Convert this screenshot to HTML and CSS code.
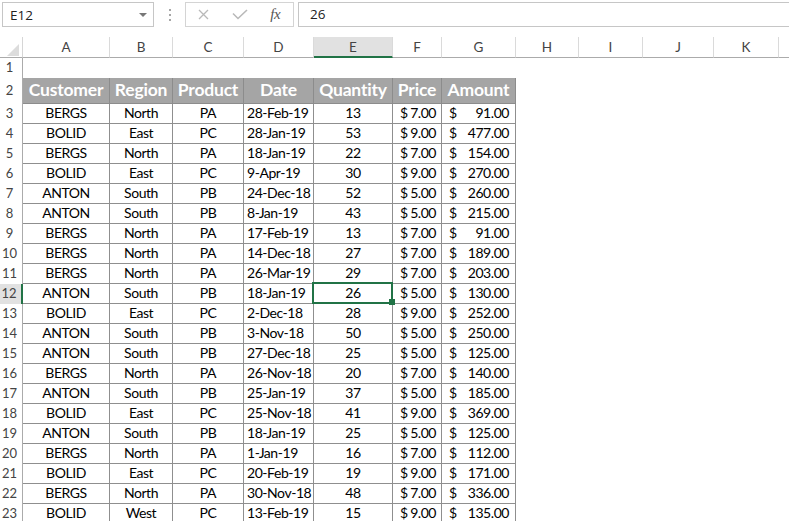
FILE: index.html
```html
<!DOCTYPE html>
<html>
<head>
<meta charset="utf-8">
<link rel="stylesheet" href="styles.css">
</head>
<body>
<div class="toolbar">
  <div class="namebox"><span>E12</span><span class="arrow"></span></div>
  <div class="grip"><i></i><i></i><i></i></div>
  <div class="fbtns">
    <div class="fbtn"><svg width="11" height="11" viewBox="0 0 11 11"><path d="M1 1L10 10M10 1L1 10" stroke="#b9b9b9" stroke-width="1.3" fill="none"/></svg></div>
    <div class="fbtn"><svg width="16" height="11" viewBox="0 0 16 11"><path d="M1 4.5L6 9.5L15 1" stroke="#b9b9b9" stroke-width="1.6" fill="none"/></svg></div>
    <div class="fbtn fx">fx</div>
  </div>
  <div class="finput">26</div>
</div>
<div class="sheet">
  <div class="row colhdr">
    <div class="corner"><span class="tri"></span></div>
    <div class="ch a">A</div><div class="ch b">B</div><div class="ch c">C</div><div class="ch d">D</div><div class="ch e active">E</div><div class="ch f">F</div><div class="ch g">G</div><div class="ch h">H</div><div class="ch i">I</div><div class="ch j">J</div><div class="ch k">K</div><div class="ch l"></div>
  </div>
  <div class="row"><div class="rh">1</div></div>
  <div class="row head"><div class="rh">2</div><div class="cell a">Customer</div><div class="cell b">Region</div><div class="cell c">Product</div><div class="cell d">Date</div><div class="cell e">Quantity</div><div class="cell f">Price</div><div class="cell g">Amount</div></div>
  <div class="row"><div class="rh">3</div><div class="cell a">BERGS</div><div class="cell b">North</div><div class="cell c">PA</div><div class="cell d">28-Feb-19</div><div class="cell e">13</div><div class="cell f acc"><span>$</span><span>7.00</span></div><div class="cell g acc"><span>$</span><span>91.00</span></div></div>
  <div class="row"><div class="rh">4</div><div class="cell a">BOLID</div><div class="cell b">East</div><div class="cell c">PC</div><div class="cell d">28-Jan-19</div><div class="cell e">53</div><div class="cell f acc"><span>$</span><span>9.00</span></div><div class="cell g acc"><span>$</span><span>477.00</span></div></div>
  <div class="row"><div class="rh">5</div><div class="cell a">BERGS</div><div class="cell b">North</div><div class="cell c">PA</div><div class="cell d">18-Jan-19</div><div class="cell e">22</div><div class="cell f acc"><span>$</span><span>7.00</span></div><div class="cell g acc"><span>$</span><span>154.00</span></div></div>
  <div class="row"><div class="rh">6</div><div class="cell a">BOLID</div><div class="cell b">East</div><div class="cell c">PC</div><div class="cell d">9-Apr-19</div><div class="cell e">30</div><div class="cell f acc"><span>$</span><span>9.00</span></div><div class="cell g acc"><span>$</span><span>270.00</span></div></div>
  <div class="row"><div class="rh">7</div><div class="cell a">ANTON</div><div class="cell b">South</div><div class="cell c">PB</div><div class="cell d">24-Dec-18</div><div class="cell e">52</div><div class="cell f acc"><span>$</span><span>5.00</span></div><div class="cell g acc"><span>$</span><span>260.00</span></div></div>
  <div class="row"><div class="rh">8</div><div class="cell a">ANTON</div><div class="cell b">South</div><div class="cell c">PB</div><div class="cell d">8-Jan-19</div><div class="cell e">43</div><div class="cell f acc"><span>$</span><span>5.00</span></div><div class="cell g acc"><span>$</span><span>215.00</span></div></div>
  <div class="row"><div class="rh">9</div><div class="cell a">BERGS</div><div class="cell b">North</div><div class="cell c">PA</div><div class="cell d">17-Feb-19</div><div class="cell e">13</div><div class="cell f acc"><span>$</span><span>7.00</span></div><div class="cell g acc"><span>$</span><span>91.00</span></div></div>
  <div class="row"><div class="rh">10</div><div class="cell a">BERGS</div><div class="cell b">North</div><div class="cell c">PA</div><div class="cell d">14-Dec-18</div><div class="cell e">27</div><div class="cell f acc"><span>$</span><span>7.00</span></div><div class="cell g acc"><span>$</span><span>189.00</span></div></div>
  <div class="row"><div class="rh">11</div><div class="cell a">BERGS</div><div class="cell b">North</div><div class="cell c">PA</div><div class="cell d">26-Mar-19</div><div class="cell e">29</div><div class="cell f acc"><span>$</span><span>7.00</span></div><div class="cell g acc"><span>$</span><span>203.00</span></div></div>
  <div class="row"><div class="rh active">12</div><div class="cell a">ANTON</div><div class="cell b">South</div><div class="cell c">PB</div><div class="cell d">18-Jan-19</div><div class="cell e selected">26</div><div class="cell f acc"><span>$</span><span>5.00</span></div><div class="cell g acc"><span>$</span><span>130.00</span></div></div>
  <div class="row"><div class="rh">13</div><div class="cell a">BOLID</div><div class="cell b">East</div><div class="cell c">PC</div><div class="cell d">2-Dec-18</div><div class="cell e">28</div><div class="cell f acc"><span>$</span><span>9.00</span></div><div class="cell g acc"><span>$</span><span>252.00</span></div></div>
  <div class="row"><div class="rh">14</div><div class="cell a">ANTON</div><div class="cell b">South</div><div class="cell c">PB</div><div class="cell d">3-Nov-18</div><div class="cell e">50</div><div class="cell f acc"><span>$</span><span>5.00</span></div><div class="cell g acc"><span>$</span><span>250.00</span></div></div>
  <div class="row"><div class="rh">15</div><div class="cell a">ANTON</div><div class="cell b">South</div><div class="cell c">PB</div><div class="cell d">27-Dec-18</div><div class="cell e">25</div><div class="cell f acc"><span>$</span><span>5.00</span></div><div class="cell g acc"><span>$</span><span>125.00</span></div></div>
  <div class="row"><div class="rh">16</div><div class="cell a">BERGS</div><div class="cell b">North</div><div class="cell c">PA</div><div class="cell d">26-Nov-18</div><div class="cell e">20</div><div class="cell f acc"><span>$</span><span>7.00</span></div><div class="cell g acc"><span>$</span><span>140.00</span></div></div>
  <div class="row"><div class="rh">17</div><div class="cell a">ANTON</div><div class="cell b">South</div><div class="cell c">PB</div><div class="cell d">25-Jan-19</div><div class="cell e">37</div><div class="cell f acc"><span>$</span><span>5.00</span></div><div class="cell g acc"><span>$</span><span>185.00</span></div></div>
  <div class="row"><div class="rh">18</div><div class="cell a">BOLID</div><div class="cell b">East</div><div class="cell c">PC</div><div class="cell d">25-Nov-18</div><div class="cell e">41</div><div class="cell f acc"><span>$</span><span>9.00</span></div><div class="cell g acc"><span>$</span><span>369.00</span></div></div>
  <div class="row"><div class="rh">19</div><div class="cell a">ANTON</div><div class="cell b">South</div><div class="cell c">PB</div><div class="cell d">18-Jan-19</div><div class="cell e">25</div><div class="cell f acc"><span>$</span><span>5.00</span></div><div class="cell g acc"><span>$</span><span>125.00</span></div></div>
  <div class="row"><div class="rh">20</div><div class="cell a">BERGS</div><div class="cell b">North</div><div class="cell c">PA</div><div class="cell d">1-Jan-19</div><div class="cell e">16</div><div class="cell f acc"><span>$</span><span>7.00</span></div><div class="cell g acc"><span>$</span><span>112.00</span></div></div>
  <div class="row"><div class="rh">21</div><div class="cell a">BOLID</div><div class="cell b">East</div><div class="cell c">PC</div><div class="cell d">20-Feb-19</div><div class="cell e">19</div><div class="cell f acc"><span>$</span><span>9.00</span></div><div class="cell g acc"><span>$</span><span>171.00</span></div></div>
  <div class="row"><div class="rh">22</div><div class="cell a">BERGS</div><div class="cell b">North</div><div class="cell c">PA</div><div class="cell d">30-Nov-18</div><div class="cell e">48</div><div class="cell f acc"><span>$</span><span>7.00</span></div><div class="cell g acc"><span>$</span><span>336.00</span></div></div>
  <div class="row"><div class="rh">23</div><div class="cell a">BOLID</div><div class="cell b">West</div><div class="cell c">PC</div><div class="cell d">13-Feb-19</div><div class="cell e">15</div><div class="cell f acc"><span>$</span><span>9.00</span></div><div class="cell g acc"><span>$</span><span>135.00</span></div></div>
</div>
</body>
</html>
```
FILE: styles.css
```css
* { box-sizing: border-box; }
html, body { margin: 0; padding: 0; background: #fff; }
body {
  width: 789px;
  height: 521px;
  overflow: hidden;
  font-family: Lato, "Liberation Sans", sans-serif;
  color: #000;
}

/* formula bar */
.toolbar {
  display: flex;
  align-items: flex-start;
  height: 37px;
  padding-top: 2px;
}
.namebox {
  margin-left: 2px;
  width: 152px;
  height: 25px;
  border: 1px solid #c6c6c6;
  display: flex;
  align-items: center;
  justify-content: space-between;
  padding: 0 6px 0 7px;
  font-family: "Open Sans", "Liberation Sans", sans-serif;
  font-size: 13.5px;
  color: #222;
}
.arrow {
  width: 0;
  height: 0;
  border-left: 4px solid transparent;
  border-right: 4px solid transparent;
  border-top: 4px solid #777;
}
.grip {
  width: 31px;
  height: 25px;
  display: flex;
  flex-direction: column;
  align-items: center;
  justify-content: center;
  gap: 3px;
}
.grip i {
  display: block;
  width: 2px;
  height: 2px;
  background: #a6a6a6;
}
.fbtns {
  width: 109px;
  height: 25px;
  border: 1px solid #d4d4d4;
  display: flex;
  align-items: center;
}
.fbtn {
  width: 36px;
  height: 23px;
  display: flex;
  align-items: center;
  justify-content: center;
}
.fbtn.fx {
  font-family: "Liberation Serif", "DejaVu Serif", serif;
  font-style: italic;
  font-size: 15px;
  color: #555;
  letter-spacing: -0.5px;
}
.finput {
  flex: 1;
  margin-left: 4px;
  margin-right: -8px;
  height: 25px;
  border: 1px solid #c6c6c6;
  padding-left: 11px;
  font-family: "Open Sans", "Liberation Sans", sans-serif;
  font-size: 13.5px;
  line-height: 23px;
  color: #222;
}

/* sheet */
.row {
  display: flex;
  height: 20px;
}
.row > div { flex: none; }
.row.head { height: 26px; }
.a { width: 87px; }
.b { width: 63px; }
.c { width: 71px; }
.d { width: 70px; }
.e { width: 79px; }
.f { width: 49px; }
.g { width: 74px; }
.h { width: 63px; }
.i { width: 64px; }
.j { width: 71px; }
.k { width: 65px; }
.l { width: 20px; }

.colhdr { height: 21px; }
.corner {
  width: 23px;
  height: 21px;
  border-right: 1px solid #d6d6d6;
  border-bottom: 1px solid #ababab;
  display: flex;
  justify-content: flex-end;
  align-items: flex-end;
  padding: 0 3px 1px 0;
}
.tri {
  width: 0;
  height: 0;
  border-left: 12px solid transparent;
  border-bottom: 12px solid #dcdcdc;
}
.ch {
  height: 21px;
  border-right: 1px solid #dadada;
  border-bottom: 1px solid #ababab;
  text-align: center;
  font-size: 13.5px;
  line-height: 20px;
  color: #444;
}
.ch.active {
  background: #e1e1e1;
  border-bottom: 2px solid #217346;
}

.rh {
  width: 23px;
  height: 20px;
  border-right: 1px solid #ababab;
  text-align: center;
  padding-right: 3px;
  font-size: 13px;
  line-height: 18px;
  color: #444;
}
.head .rh { height: 26px; line-height: 24px; }
.rh.active {
  background: #e1e1e1;
  border-right: 2px solid #217346;
}

.cell {
  height: 20px;
  border-right: 1px solid #8f8f8f;
  border-bottom: 1px solid #8f8f8f;
  font-size: 14px;
  letter-spacing: -0.45px;
  line-height: 18px;
  text-align: center;
  white-space: nowrap;
  overflow: hidden;
}
.cell.d { text-align: left; padding-left: 3px; }
.cell.acc {
  display: flex;
  justify-content: space-between;
  padding: 0 6px 0 7px;
}
.cell.f.acc { padding: 0 5px 0 7px; }

.head .cell {
  height: 26px;
  background: #a5a5a5;
  border-right-color: #8c8c8c;
  border-bottom-color: #8c8c8c;
  color: #fff;
  font-weight: bold;
  font-size: 17.5px;
  letter-spacing: -0.2px;
  line-height: 24px;
  text-align: center;
  padding: 0;
}

.cell.selected {
  position: relative;
  overflow: visible;
}
.cell.selected::before {
  content: "";
  position: absolute;
  left: -2px;
  top: -2px;
  right: -1px;
  bottom: -1px;
  border: 2px solid #217346;
}
.cell.selected::after {
  content: "";
  position: absolute;
  right: -3px;
  bottom: -2px;
  width: 6px;
  height: 6px;
  background: #217346;
}
```
